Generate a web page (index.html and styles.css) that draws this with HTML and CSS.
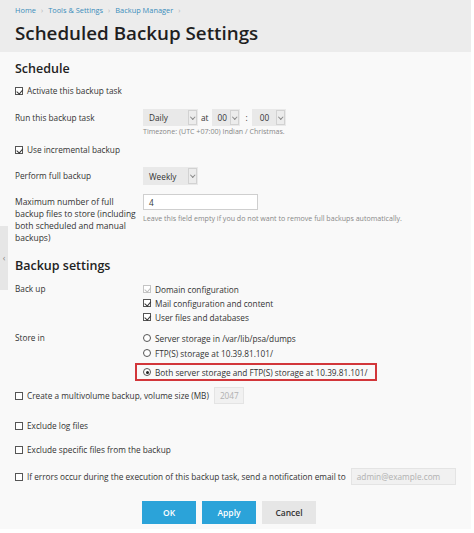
FILE: index.html
```html
<!DOCTYPE html>
<html>
<head>
<meta charset="utf-8">
<link rel="stylesheet" href="styles.css">
</head>
<body>
<div class="page">
  <div class="header">
    <div class="crumbs">
      <a>Home</a><span class="sep">›</span><a>Tools &amp; Settings</a><span class="sep">›</span><a>Backup Manager</a><span class="sep">›</span>
    </div>
    <h1 class="title">Scheduled Backup Settings</h1>
  </div>
  <div class="panel">
    <div class="side-tab">‹</div>
    <h2 class="sec sec-first">Schedule</h2>
    <div class="check-line l-activate"><span class="cb on"></span>Activate this backup task</div>

    <div class="row r-run">
      <div class="lab">Run this backup task</div>
      <div class="field">
        <div class="inline">
          <span class="sel w-daily">Daily<i class="arr"></i></span>
          <span class="txt-at">at</span>
          <span class="sel w-hh">00<i class="arr"></i></span>
          <span class="txt-colon">:</span>
          <span class="sel w-mm">00<i class="arr"></i></span>
        </div>
        <div class="hint">Timezone: (UTC +07:00) Indian / Christmas.</div>
      </div>
    </div>

    <div class="check-line l-incr"><span class="cb on"></span>Use incremental backup</div>

    <div class="row r-perf">
      <div class="lab">Perform full backup</div>
      <div class="field"><span class="sel w-daily">Weekly<i class="arr"></i></span></div>
    </div>

    <div class="row r-max">
      <div class="lab lab-multi">Maximum number of full backup files to store (including both scheduled and manual backups)</div>
      <div class="field">
        <div class="inp w-max">4</div>
        <div class="hint hint-max">Leave this field empty if you do not want to remove full backups automatically.</div>
      </div>
    </div>

    <h2 class="sec sec-second">Backup settings</h2>

    <div class="row r-backup">
      <div class="lab">Back up</div>
      <div class="field">
        <div class="opt"><span class="cb on dis"></span>Domain configuration</div>
        <div class="opt"><span class="cb on"></span>Mail configuration and content</div>
        <div class="opt"><span class="cb on"></span>User files and databases</div>
      </div>
    </div>

    <div class="row r-store">
      <div class="lab">Store in</div>
      <div class="field">
        <div class="opt"><span class="rb"></span>Server storage in /var/lib/psa/dumps</div>
        <div class="opt opt-gap"><span class="rb"></span>FTP(S) storage at 10.39.81.101/</div>
        <div class="opt hl"><span class="rb on"></span>Both server storage and FTP(S) storage at 10.39.81.101/</div>
      </div>
    </div>

    <div class="check-line l-multi"><span class="cb"></span>Create a multivolume backup, volume size (MB)<span class="inp dis w-vol">2047</span></div>
    <div class="check-line l-log"><span class="cb"></span>Exclude log files</div>
    <div class="check-line l-spec"><span class="cb"></span>Exclude specific files from the backup</div>
    <div class="check-line l-err"><span class="cb"></span>If errors occur during the execution of this backup task, send a notification email to<span class="inp dis w-mail">admin@example.com</span></div>

    <div class="buttons">
      <span class="btn primary">OK</span>
      <span class="btn primary">Apply</span>
      <span class="btn">Cancel</span>
    </div>
  </div>
</div>
</body>
</html>
```

FILE: styles.css
```css
* { box-sizing: border-box; }
html, body { margin: 0; padding: 0; background: #ffffff; }
body {
  font-family: "Open Sans", "DejaVu Sans", sans-serif;
  color: #333;
  font-size: 8.25px;
  width: 474px;
  height: 533px;
  overflow: hidden;
}
.page { width: 471px; }
.header {
  background: #ececec;
  height: 52px;
  padding: 4px 15px 0;
}
.crumbs {
  font-size: 7.4px;
  line-height: 12px;
  color: #3b8dbb;
  white-space: nowrap;
}
.crumbs a { color: #3b8dbb; }
.crumbs .sep { color: #b5b5b5; margin: 0 5px; }
.title {
  margin: 4px 0 0;
  font-size: 18.8px;
  line-height: 26px;
  font-weight: 600;
  color: #1f1f1f;
}
.panel {
  position: relative;
  background: #f9f9f9;
  padding: 0 15px;
  height: 477px;
}
.side-tab {
  position: absolute;
  left: 0;
  top: 174px;
  width: 8px;
  height: 64px;
  background: #e6e6e6;
  color: #888;
  font-size: 9px;
  line-height: 64px;
  text-align: center;
}
.sec {
  margin: 0;
  font-size: 12.5px;
  line-height: 16px;
  font-weight: 600;
  color: #222;
}
.sec-first { padding-top: 9px; }
.sec-second { margin-top: 14px; }

.check-line {
  display: flex;
  align-items: center;
  height: 14px;
  line-height: 14px;
  white-space: nowrap;
}
.cb {
  display: inline-block;
  position: relative;
  width: 8px;
  height: 8px;
  border: 1px solid #555;
  background: #fff;
  margin-right: 4px;
  flex: none;
}
.cb.on::after {
  content: "";
  position: absolute;
  left: 1.5px;
  top: 0px;
  width: 2.5px;
  height: 4.5px;
  border-right: 1.2px solid #333;
  border-bottom: 1.2px solid #333;
  transform: rotate(40deg);
}
.cb.dis { border-color: #c4c4c4; }
.cb.dis::after { border-color: #bdbdbd; }
.rb {
  display: inline-block;
  position: relative;
  width: 8px;
  height: 8px;
  border: 1px solid #555;
  border-radius: 50%;
  background: #fff;
  margin-right: 4px;
  flex: none;
}
.rb.on::after {
  content: "";
  position: absolute;
  left: 1.5px;
  top: 1.5px;
  width: 3px;
  height: 3px;
  border-radius: 50%;
  background: #222;
}

.l-activate { margin-top: 7px; }
.l-incr { margin-top: 6px; }
.l-multi { margin-top: 6px; height: 17px; }
.l-log { margin-top: 15px; }
.l-spec { margin-top: 10px; }
.l-err { margin-top: 11px; height: 17px; }

.row {
  display: grid;
  grid-template-columns: 128px 1fr;
}
.lab { line-height: 17px; }
.r-run { margin-top: 11px; }
.r-perf { margin-top: 10px; }
.r-perf .lab { line-height: 18px; }
.r-max { margin-top: 9px; }
.lab-multi { line-height: 12px; padding-top: 2px; padding-right: 4px; font-size: 8.5px; }
.r-backup { margin-top: 8px; }
.r-backup .lab, .r-store .lab { line-height: 14px; }
.r-store { margin-top: 7px; }

.inline { display: flex; align-items: center; height: 17px; }
.sel {
  position: relative;
  display: inline-flex;
  align-items: center;
  height: 17px;
  background: #e9e9e9;
  padding-left: 6px;
  color: #333;
}
.r-perf .sel { height: 18px; }
.sel .arr {
  position: absolute;
  right: 1px;
  top: 1px;
  bottom: 1px;
  width: 9px;
  border: 1px solid #d2d2d2;
  background: #ececec;
}
.sel .arr::after {
  content: "";
  position: absolute;
  left: 2px;
  top: 4px;
  width: 2.5px;
  height: 2.5px;
  border-right: 1px solid #888;
  border-bottom: 1px solid #888;
  transform: rotate(45deg);
}
.w-daily { width: 55px; }
.w-hh { width: 28px; padding-left: 6px; }
.w-mm { width: 34px; padding-left: 8px; }
.txt-at { margin: 0 3px 0 3px; }
.txt-colon { margin: 0 4px 0 6px; }
.hint {
  font-size: 7.1px;
  color: #888;
  line-height: 11px;
  white-space: nowrap;
}
.hint-max { margin-top: 3px; }
.inp {
  display: flex;
  align-items: center;
  background: #fff;
  border: 1px solid #cfcfcf;
  height: 16px;
  padding-left: 5px;
  color: #333;
}
.w-max { width: 115px; }
.inp.dis { background: #f1f1f1; border-color: #e4e4e4; color: #b0b0b0; height: 17px; }
.w-vol { width: 30px; margin-left: 5px; }
.w-mail { width: 107px; margin-left: 5px; }

.opt {
  display: flex;
  align-items: center;
  height: 14px;
  white-space: nowrap;
}
.opt-gap { margin-top: 1px; }
.hl {
  margin-top: 3px;
  margin-left: -8px;
  width: 242px;
  height: 18px;
  border: 2px solid #d2363a;
  padding-left: 6px;
}

.buttons {
  display: flex;
  gap: 6px;
  margin-top: 16px;
  padding-left: 127px;
}
.btn {
  display: inline-flex;
  align-items: center;
  justify-content: center;
  height: 23px;
  width: 54px;
  background: #e6e6e6;
  color: #333;
  font-weight: 600;
  font-size: 8.5px;
}
.btn.primary { background: #2ba3d9; color: #fff; }
```
